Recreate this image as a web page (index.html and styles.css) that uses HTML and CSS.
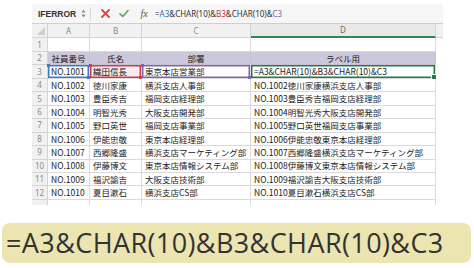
FILE: index.html
```html
<!DOCTYPE html>
<html lang="ja">
<head>
<meta charset="utf-8">
<link rel="stylesheet" href="styles.css">
</head>
<body>
<div class="sheet">
  <div class="fbar">
    <div class="namebox">IFERROR</div>
    <div class="spin">
      <svg width="5" height="9" viewBox="0 0 5 9"><path d="M2.5 0.5 L4.5 3.5 L0.5 3.5 Z M2.5 8.5 L4.5 5.5 L0.5 5.5 Z" fill="#8a8a8a"/></svg>
    </div>
    <div class="sep"></div>
    <div class="icon x"><svg width="9" height="9" viewBox="0 0 9 9"><path d="M1 1 L8 8 M8 1 L1 8" stroke="#d9453a" stroke-width="1.8" stroke-linecap="round"/></svg></div>
    <div class="icon ok"><svg width="10" height="9" viewBox="0 0 10 9"><path d="M1 4.8 L3.8 7.5 L9 1.5" stroke="#5ba55e" stroke-width="1.6" fill="none" stroke-linecap="round" stroke-linejoin="round"/></svg></div>
    <div class="icon fx">fx</div>
    <div class="formula">=<span class="ra">A3</span>&amp;CHAR(10)&amp;<span class="rb">B3</span>&amp;CHAR(10)&amp;<span class="rc">C3</span></div>
  </div>
  <div class="grid">
    <div class="c corner"><svg width="8" height="8" viewBox="0 0 8 8"><path d="M8 0 L8 8 L0 8 Z" fill="#cfcfcf"/></svg></div>
    <div class="c ch">A</div>
    <div class="c ch">B</div>
    <div class="c ch">C</div>
    <div class="c ch sel">D</div>
    <div class="c chx"></div>

    <div class="c rh">1</div>
    <div class="c"></div><div class="c"></div><div class="c"></div><div class="c"></div><div class="c blank"></div>

    <div class="c rh">2</div>
    <div class="c hd">社員番号</div><div class="c hd">氏名</div><div class="c hd">部署</div><div class="c hd">ラベル用</div><div class="c blank"></div>

    <div class="c rh">3</div>
    <div class="c ref ref-a">NO.1001</div><div class="c ref ref-b">織田信長</div><div class="c ref ref-c">東京本店営業部</div><div class="c act">=A3&amp;CHAR(10)&amp;B3&amp;CHAR(10)&amp;C3</div><div class="c blank"></div>

    <div class="c rh">4</div>
    <div class="c">NO.1002</div><div class="c">徳川家康</div><div class="c">横浜支店人事部</div><div class="c">NO.1002徳川家康横浜支店人事部</div><div class="c blank"></div>

    <div class="c rh">5</div>
    <div class="c">NO.1003</div><div class="c">豊臣秀吉</div><div class="c">福岡支店経理部</div><div class="c">NO.1003豊臣秀吉福岡支店経理部</div><div class="c blank"></div>

    <div class="c rh">6</div>
    <div class="c">NO.1004</div><div class="c">明智光秀</div><div class="c">大阪支店開発部</div><div class="c">NO.1004明智光秀大阪支店開発部</div><div class="c blank"></div>

    <div class="c rh">7</div>
    <div class="c">NO.1005</div><div class="c">野口英世</div><div class="c">福岡支店事業部</div><div class="c">NO.1005野口英世福岡支店事業部</div><div class="c blank"></div>

    <div class="c rh">8</div>
    <div class="c">NO.1006</div><div class="c">伊能忠敬</div><div class="c">東京本店経理部</div><div class="c">NO.1006伊能忠敬東京本店経理部</div><div class="c blank"></div>

    <div class="c rh">9</div>
    <div class="c">NO.1007</div><div class="c">西郷隆盛</div><div class="c">横浜支店マーケティング部</div><div class="c">NO.1007西郷隆盛横浜支店マーケティング部</div><div class="c blank"></div>

    <div class="c rh">10</div>
    <div class="c">NO.1008</div><div class="c">伊藤博文</div><div class="c">東京本店情報システム部</div><div class="c">NO.1008伊藤博文東京本店情報システム部</div><div class="c blank"></div>

    <div class="c rh">11</div>
    <div class="c">NO.1009</div><div class="c">福沢諭吉</div><div class="c">大阪支店技術部</div><div class="c">NO.1009福沢諭吉大阪支店技術部</div><div class="c blank"></div>

    <div class="c rh">12</div>
    <div class="c">NO.1010</div><div class="c">夏目漱石</div><div class="c">横浜支店CS部</div><div class="c">NO.1010夏目漱石横浜支店CS部</div><div class="c blank"></div>

    <div class="c rh part"></div>
    <div class="c part"></div><div class="c part"></div><div class="c part"></div><div class="c part"></div><div class="c blank"></div>
  </div>
</div>
<div class="banner">=A3&amp;CHAR(10)&amp;B3&amp;CHAR(10)&amp;C3</div>
</body>
</html>
```
FILE: styles.css
```css
* { box-sizing: border-box; }
html, body { margin: 0; padding: 0; background: #fff; }
body {
  width: 474px;
  height: 268px;
  overflow: hidden;
  font-family: "Noto Sans CJK JP", "Noto Sans", sans-serif;
  color: #222;
}
.sheet {
  margin: 4px 0 0 32px;
  width: 411px;
}
.fbar {
  height: 20px;
  display: flex;
  align-items: center;
  background: #f6f6f6;
  border-bottom: 1px solid #cfcfcf;
  font-family: "Liberation Sans", "Noto Sans", sans-serif;
}
.namebox {
  width: 49px;
  padding-left: 6px;
  font-size: 8.5px;
  font-weight: bold;
  color: #333;
}
.spin { width: 6px; display: flex; align-items: center; }
.sep { width: 1px; height: 14px; background: #d8d8d8; margin: 0 9px 0 3px; }
.icon { display: flex; align-items: center; justify-content: center; }
.x { width: 10px; margin-right: 9px; }
.ok { width: 10px; margin-right: 10px; }
.fx {
  width: 10px;
  margin-right: 6px;
  font-family: "Liberation Serif", serif;
  font-style: italic;
  font-size: 10px;
  color: #555;
}
.formula {
  font-family: "Noto Sans", sans-serif;
  font-size: 8px;
  color: #333;
  white-space: nowrap;
}
.ra { color: #2f6fc0; }
.rb { color: #c8363f; }
.rc { color: #7d5ea8; }

.grid {
  display: grid;
  grid-template-columns: 16px 42px 52px 109px 185px 7px;
  grid-template-rows: 14px 14px repeat(11, 13.45px) 5px;
}
.c {
  position: relative;
  display: flex;
  align-items: center;
  padding-left: 3px;
  border-right: 1px solid #dadada;
  border-bottom: 1px solid #dadada;
  font-size: 8.5px;
  line-height: 1;
  white-space: nowrap;
  overflow: visible;
  background: #fff;
}
.corner, .ch, .rh, .chx {
  background: #f1f1f1;
  color: #8a8a8a;
  border-color: #d4d4d4;
}
.corner { justify-content: flex-end; align-items: flex-end; padding: 0 2px 2px 0; }
.ch { justify-content: center; padding-left: 0; font-size: 8px; font-family: "Noto Sans", sans-serif; }
.ch.sel { border-bottom: 2px solid #2d8a57; background: #e9e9e9; color: #666; }
.chx { border-right: none; }
.rh { justify-content: center; padding-left: 0; font-size: 8px; font-family: "Noto Sans", sans-serif; }
.blank { border: none; background: #fff; }
.hd { background: #cdc7dc; justify-content: center; padding-left: 0; color: #222; border-color: #c4bfd2; }
.ref-a { box-shadow: inset 0 0 0 1.5px #3d7cc4; }
.ref-b { box-shadow: inset 0 0 0 1.5px #cf3d48; background: #f8ecee; }
.ref-c { box-shadow: inset 0 0 0 1.5px #8465aa; }
.ref::before, .ref::after {
  content: "";
  position: absolute;
  width: 3px;
  height: 3px;
}
.ref::before { left: -1px; top: -1px; }
.ref::after { right: -1px; bottom: -1px; }
.ref-a::before, .ref-a::after { background: #3d7cc4; }
.ref-b::before, .ref-b::after { background: #cf3d48; }
.ref-c::before, .ref-c::after { background: #8465aa; }
.act { box-shadow: inset 0 0 0 1.5px #237a4b; }
.act::after {
  content: "";
  position: absolute;
  right: -2px;
  bottom: -2px;
  width: 4px;
  height: 4px;
  background: #237a4b;
  border: 1px solid #fff;
}
.part { border-bottom: none; }

.banner {
  margin: 18px 0 0 2px;
  width: 469px;
  height: 40px;
  border-radius: 8px;
  background: #ece5b2;
  display: flex;
  align-items: center;
  padding-left: 4px;
  font-family: "Open Sans", "Noto Sans", sans-serif;
  font-size: 27px;
  letter-spacing: 0.4px;
  color: #333;
  white-space: nowrap;
}
```
